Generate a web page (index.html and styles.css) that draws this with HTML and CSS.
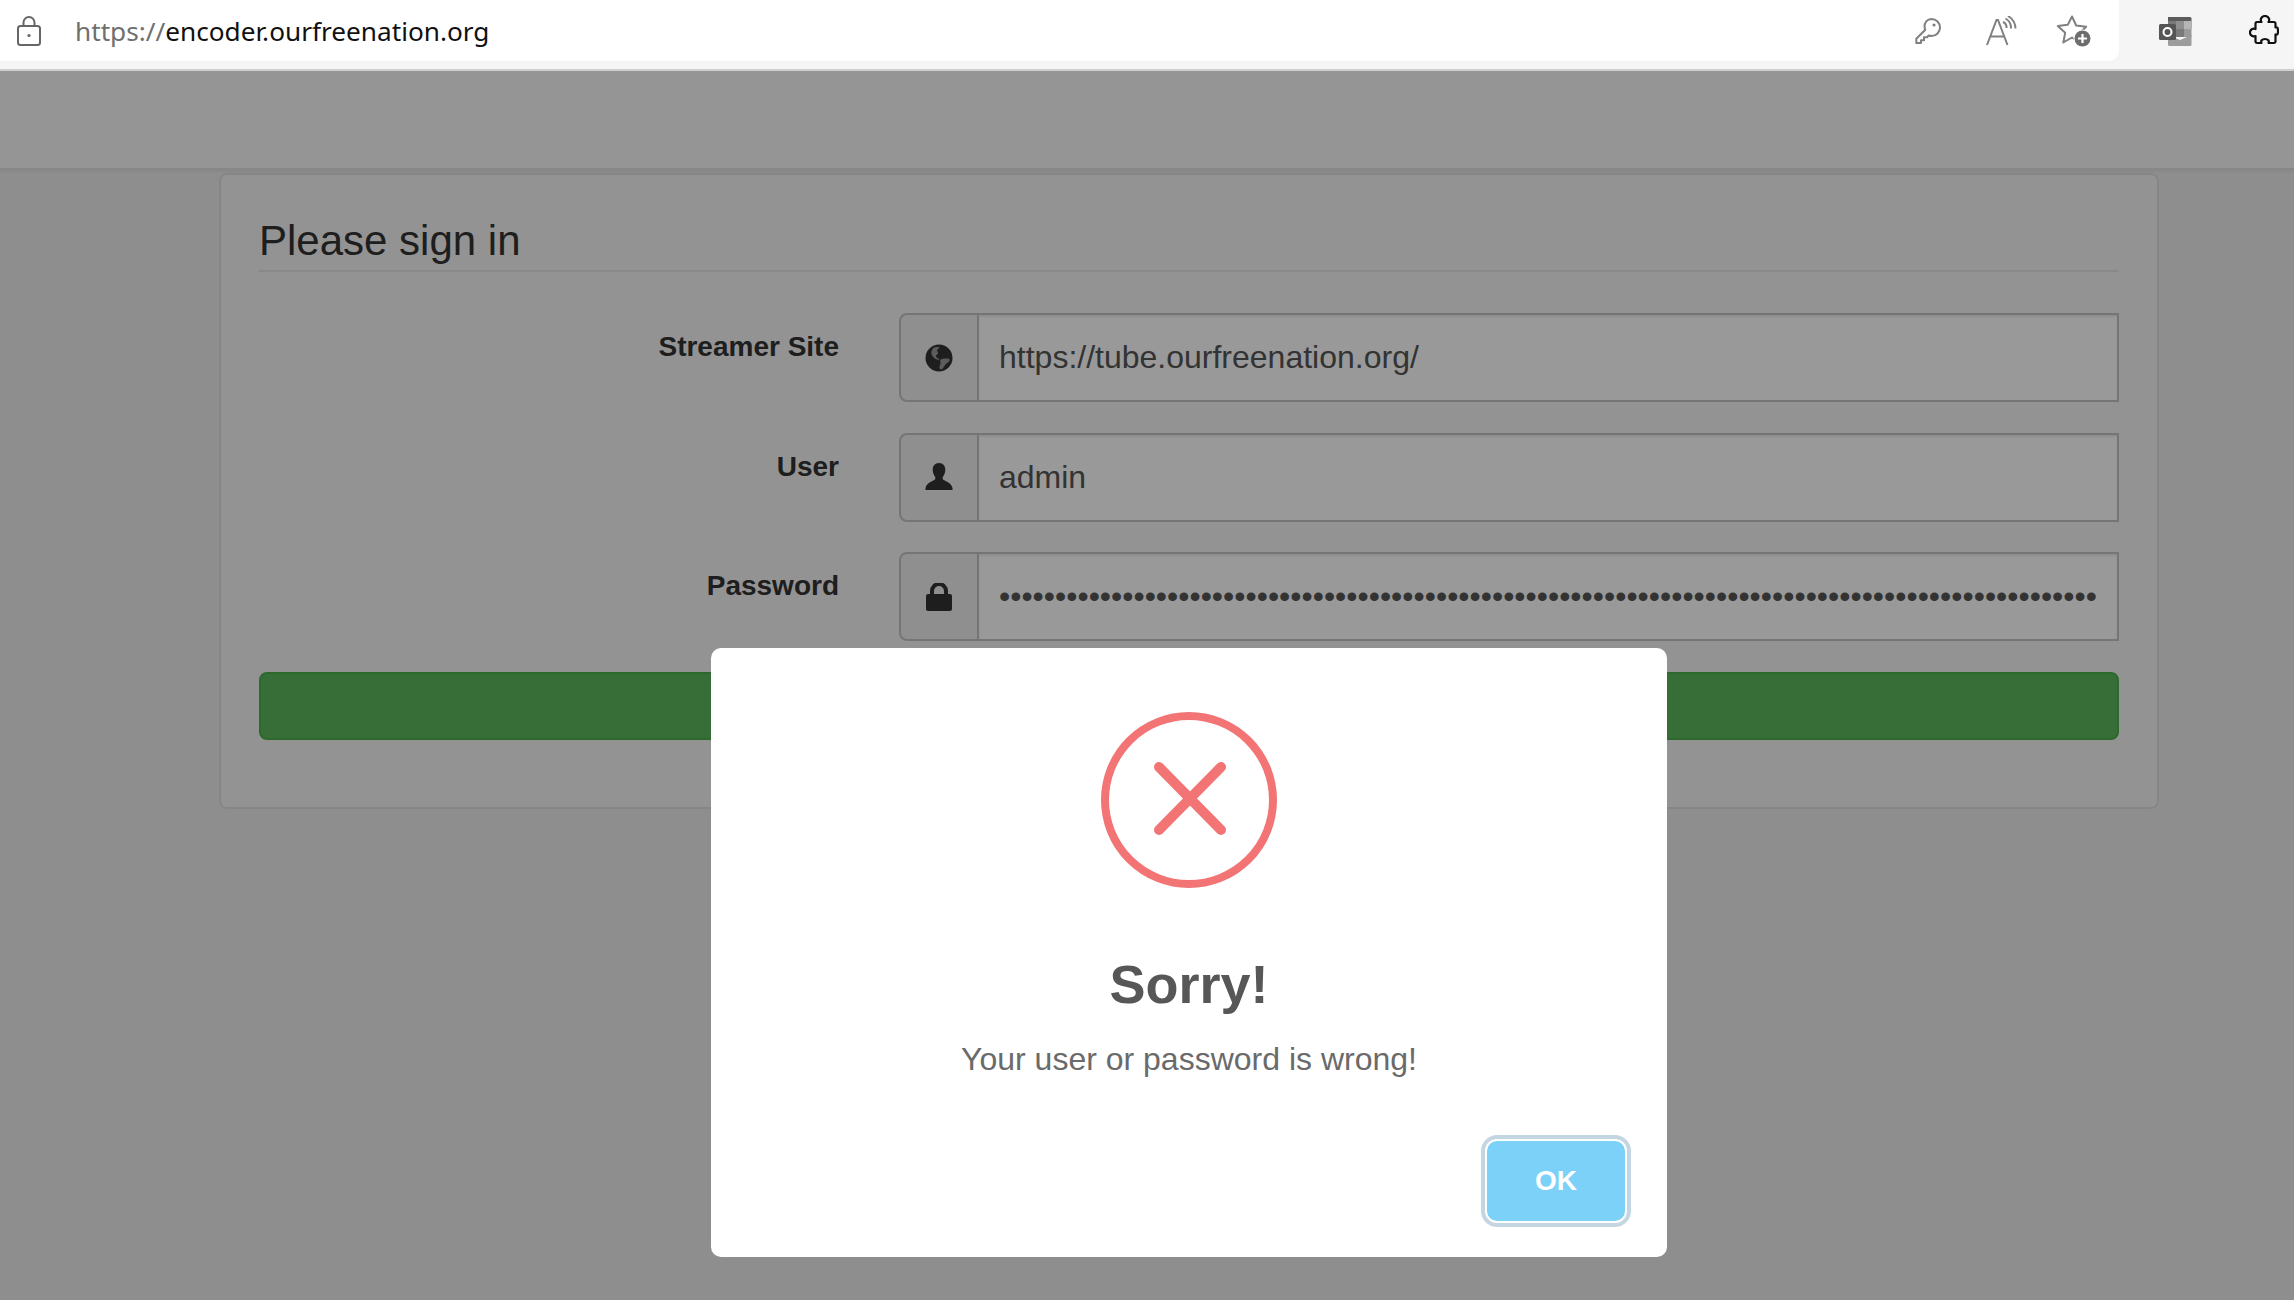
FILE: index.html
```html
<!DOCTYPE html>
<html lang="en">
<head>
  <meta charset="UTF-8" />
  <title>Please sign in</title>
  <link rel="stylesheet" href="styles.css">
</head>
<body>
  <!-- browser toolbar -->
  <div class="toolbar">
    <div class="address-bar">
      <svg class="lock-icon" width="24" height="30" viewBox="0 0 24 30" fill="none" stroke="#666" stroke-width="2">
        <rect x="1" y="10" width="22" height="19" rx="2.5"/>
        <path d="M6.500 10V6.500a5.500 5.500 0 0 1 11 0V10"/>
        <circle cx="12" cy="19.500" r="1.600" fill="#666" stroke="none"/>
      </svg>
      <div class="url"><span class="url-scheme">https://</span>encoder.ourfreenation.org</div>
      <div class="bar-icons">
        <svg class="icon-key" width="28" height="28" viewBox="0 0 28 28" fill="none" stroke="#808080" stroke-width="2" stroke-linejoin="round">
          <path d="M17.500 2a8.500 8.500 0 0 1 0 17c-1 0-2-.2-2.800-.5l-1.700 1.800h-3v3h-3v2.700H2.300v-4.200l9-9c-.5-1-.7-1.900-.7-2.900A7 7 0 0 1 17.500 2z"/>
          <circle cx="20" cy="8" r="1.600" fill="#808080" stroke="none"/>
        </svg>
        <svg class="icon-read" width="32" height="30" viewBox="0 0 32 30" fill="none" stroke="#808080" stroke-width="2">
          <path d="M1 29 10.500 4h1.500l9.500 25M4.500 20.500h13.500"/>
          <path d="M17 6a6 6 0 0 1 3.500 6M19.500 2.500a11 11 0 0 1 5.500 10M22 0a15 15 0 0 1 7.500 12.500"/>
        </svg>
        <svg width="36" height="34" viewBox="0 0 36 34" fill="none">
          <path d="M16 2.500l4.200 9 10 1.200-7.300 6.800 1.900 9.800L16 23.500 7.300 28.500l1.900-9.800L1.800 12l10-1.300z" stroke="#808080" stroke-width="2" stroke-linejoin="round"/>
          <circle cx="26.500" cy="24.500" r="9" fill="#fff"/>
          <circle cx="26.500" cy="24.500" r="8" fill="#6e6e6e"/>
          <path d="M26.500 20v9M22 24.500h9" stroke="#fff" stroke-width="2.200"/>
        </svg>
      </div>
    </div>
    <div class="extensions">
      <svg width="33" height="30" viewBox="0 0 33 30">
        <path d="M9 1h22a1.500 1.500 0 0 1 1.500 1.500V13H9z" fill="#5c5c5c"/>
        <rect x="9" y="5" width="8" height="8" fill="#7a7a7a"/>
        <rect x="17" y="5" width="8" height="8" fill="#8f8f8f"/>
        <rect x="25" y="5" width="7.500" height="8" fill="#b5b5b5"/>
        <rect x="9" y="13" width="8" height="8" fill="#5f5f5f"/>
        <rect x="17" y="13" width="8" height="8" fill="#7a7a7a"/>
        <rect x="25" y="13" width="7.500" height="8" fill="#9a9a9a"/>
        <path d="M9 19l12 5 11.500-5v9.500A1.500 1.500 0 0 1 31 30H10.500A1.500 1.500 0 0 1 9 28.500z" fill="#9c9c9c"/>
        <rect x="0" y="8" width="17" height="16" rx="1.500" fill="#555"/>
        <circle cx="8.500" cy="16" r="4" fill="none" stroke="#fff" stroke-width="2"/>
      </svg>
      <svg width="30" height="32" viewBox="0 0 30 32" fill="none" stroke="#111" stroke-width="2.200" stroke-linejoin="round">
        <path d="M8 7h4.500c-1.500-2-.5-6 3.500-6s5 4 3.500 6H25a1.500 1.500 0 0 1 1.500 1.500v4c2-.8 2.500.5 2.500 3.500s-.5 4.300-2.500 3.500v7a1.500 1.500 0 0 1-1.500 1.500h-5.500c1-2-.3-4-3.500-4s-4.500 2-3.500 4H8a1.500 1.500 0 0 1-1.500-1.500V21c-2.500 1-5.500-.3-5.500-3.500s3-4.500 5.500-3.500V8.500A1.500 1.500 0 0 1 8 7z"/>
      </svg>
    </div>
  </div>

  <div class="page">
    <nav class="navbar"></nav>

    <div class="panel">
      <h2 class="panel-title">Please sign in</h2>

      <div class="form-row">
        <label class="form-label">Streamer Site</label>
        <div class="input-group">
          <span class="addon">
            <svg width="28" height="28" viewBox="0 0 28 28">
              <circle cx="14" cy="14" r="13.500" fill="#333"/>
              <path d="M9 3.500c2-.8 4-.8 5.500 0-.5 1.500-2.500 1.500-2.500 3 0 1.200 1.500 1.500 1 3-.5 1.400-2.500 1.200-2 3 .5 1.500 3 1.500 3.500 3.200-2.500.5-5.500-1-7-3.700C5.500 9.500 6.500 5.500 9 3.500z" fill="#9a9a9a"/>
              <path d="M15 16c2.500-1.300 6.500-1.800 9.500-1 .2 1.500-.5 3-1.500 3.500-1.500.6-2.500 1.500-3.500 3.500-1 1.500-2 3-3.500 3.500-1.500-.5-2-2-1.200-3.700.8-2 1.200-3.800.2-5.800z" fill="#9a9a9a"/>
            </svg>
          </span>
          <input class="form-input" type="text" value="https://tube.ourfreenation.org/" />
        </div>
      </div>

      <div class="form-row">
        <label class="form-label">User</label>
        <div class="input-group">
          <span class="addon">
            <svg width="28" height="28" viewBox="0 0 28 28" fill="#333">
              <path d="M14 0c4.200 0 6.300 3 6.300 6.500 0 3-1 5.500-2.300 7.300-.8 1.200-.6 2.400.7 3.200 2.800 1.600 6.800 3 8.300 6.500.5 1.200.6 2.500.6 3.500H.4c0-1 .1-2.300.6-3.500 1.500-3.500 5.500-4.900 8.300-6.500 1.300-.8 1.500-2 .7-3.200C8.700 12 7.700 9.500 7.700 6.500 7.700 3 9.800 0 14 0z"/>
            </svg>
          </span>
          <input class="form-input" type="text" value="admin" />
        </div>
      </div>

      <div class="form-row">
        <label class="form-label">Password</label>
        <div class="input-group">
          <span class="addon">
            <svg width="28" height="28" viewBox="0 0 28 28">
              <path d="M7 12V8a7 7 0 0 1 14 0v4" fill="none" stroke="#333" stroke-width="4"/>
              <rect x="1" y="11" width="26" height="17" rx="2" fill="#333"/>
            </svg>
          </span>
          <input class="form-input" type="password" value="aaaaaaaaaaaaaaaaaaaaaaaaaaaaaaaaaaaaaaaaaaaaaaaaaaaaaaaaaaaaaaaaaaaaaaaaaaaaaaaaaaaaaaaaaaaaaaaaaa" />
        </div>
      </div>

      <button class="btn-submit" type="button"></button>
    </div>

    <div class="overlay"></div>

    <div class="modal">
      <svg class="modal-icon" width="176" height="176" viewBox="0 0 176 176" fill="none" stroke="#f27474" stroke-width="8" stroke-linecap="round">
        <circle cx="88" cy="88" r="84"/>
        <path d="M58 55l62 63M120 55L58 118" stroke-width="10"/>
      </svg>
      <div class="modal-title">Sorry!</div>
      <div class="modal-text">Your user or password is wrong!</div>
      <div class="modal-footer">
        <button class="btn-ok" type="button">OK</button>
      </div>
    </div>
  </div>
</body>
</html>
```

FILE: styles.css
```css
* {
  margin: 0;
  padding: 0;
  box-sizing: border-box;
}
body {
  width: 100%;
  height: 100vh;
  overflow: hidden;
  font-family: "Liberation Sans", Arial, sans-serif;
  background: #ededed;
}

/* browser toolbar */
.toolbar {
  display: flex;
  height: 71px;
  background: #f5f5f5;
  border-bottom: 2px solid #cfcfcf;
}
.address-bar {
  display: flex;
  align-items: center;
  width: 2119px;
  height: 61px;
  padding: 0 27px 0 17px;
  background: #fff;
  border-radius: 0 0 10px 0;
}
.lock-icon {
  margin-right: 34px;
}
.url {
  flex: 1;
  font-family: "Noto Sans", sans-serif;
  font-size: 26.2px;
  color: #111;
}
.url-scheme {
  color: #6f6f6f;
}
.bar-icons {
  display: flex;
  align-items: center;
}
.icon-key {
  margin-right: 44px;
}
.icon-read {
  margin-right: 38px;
}
.extensions {
  flex: 1;
  display: flex;
  align-items: center;
  justify-content: space-between;
  height: 61px;
  padding: 0 15px 0 40px;
}

/* page behind the dialog */
.page {
  position: relative;
  height: 1229px;
}
.navbar {
  height: 99px;
  background: #f8f8f8;
  border-bottom: 2px solid #e2e2e2;
  box-shadow: 0 2px 3px rgba(0, 0, 0, 0.05);
}
.panel {
  width: 1940px;
  height: 636px;
  margin: 3px 0 0 219px;
  padding: 0 38px;
  background: #f5f5f5;
  border: 2px solid #e0e0e0;
  border-radius: 8px;
}
.panel-title {
  height: 97px;
  margin-bottom: 41px;
  padding-top: 42px;
  font-size: 42px;
  font-weight: 400;
  line-height: 48px;
  color: #333;
  border-bottom: 2px solid #e5e5e5;
}
.form-row {
  display: flex;
  margin-bottom: 30.5px;
}
.form-label {
  width: 640px;
  padding: 14px 60px 0 0;
  font-size: 28px;
  font-weight: 700;
  line-height: 40px;
  text-align: right;
  color: #333;
}
.input-group {
  flex: 1;
  display: flex;
  height: 89px;
}
.addon {
  display: flex;
  align-items: center;
  justify-content: center;
  width: 80px;
  background: #eee;
  border: 2px solid #c4c4c4;
  border-radius: 8px 0 0 8px;
}
.form-input {
  flex: 1;
  min-width: 0;
  padding: 0 20px;
  font-family: "Liberation Sans", Arial, sans-serif;
  font-size: 32px;
  color: #555;
  background: #fff;
  border: 2px solid #c4c4c4;
  border-left: 0;
  border-radius: 0;
  outline: none;
  box-shadow: inset 0 2px 2px rgba(0, 0, 0, 0.075);
}
.btn-submit {
  display: block;
  width: 100%;
  height: 68px;
  background: #5cb85c;
  border: 2px solid #4cae4c;
  border-radius: 8px;
}

/* dialog */
.overlay {
  position: absolute;
  inset: 0;
  background: rgba(0, 0, 0, 0.4);
}
.modal {
  position: absolute;
  top: 577px;
  left: 711px;
  width: 956px;
  height: 609px;
  padding-top: 64px;
  text-align: center;
  background: #fff;
  border-radius: 10px;
}
.modal-icon {
  display: block;
  margin: 0 auto 64px;
}
.modal-title {
  font-size: 54px;
  font-weight: 700;
  line-height: 64px;
  color: #575757;
}
.modal-text {
  margin-top: 21px;
  font-size: 32px;
  line-height: 44px;
  color: #6a6a6a;
}
.modal-footer {
  display: flex;
  justify-content: flex-end;
  margin-top: 60px;
  padding-right: 42px;
}
.btn-ok {
  width: 138px;
  height: 80px;
  font-family: "Liberation Sans", Arial, sans-serif;
  font-size: 28px;
  font-weight: 700;
  color: #fff;
  background: #7cd1f9;
  border: none;
  border-radius: 10px;
  box-shadow: 0 0 0 2px #fff, 0 0 0 6px #c5d6e3;
}
```
